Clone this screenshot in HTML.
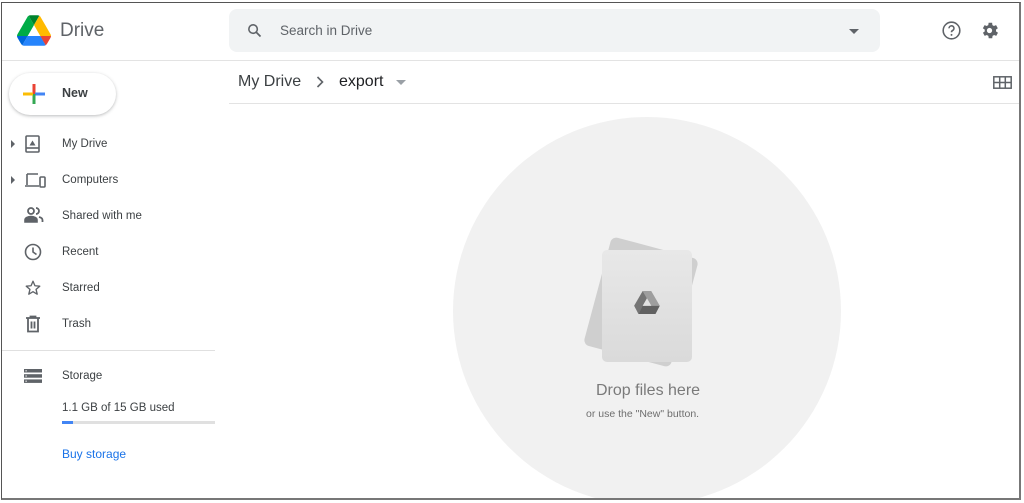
<!DOCTYPE html>
<html><head><style>
*{margin:0;padding:0;box-sizing:border-box}
body{width:1024px;height:503px;background:#fff;font-family:"Liberation Sans",Arial,sans-serif;position:relative;overflow:hidden;color:#3c4043}
.frame{position:absolute;left:1px;top:2px;width:1020px;height:498px;border:1px solid #555;border-right:2px solid #777;border-bottom:2px solid #777;z-index:5}
.a{position:absolute}
.nav{position:absolute;left:62px;font-size:11.5px;color:#3c4043}
.ic{position:absolute;left:24px}
</style></head><body>
<div class="frame"></div>
<!-- logo -->
<svg class="a" style="left:17px;top:15px" width="34" height="31" viewBox="0 0 87.3 78">
<path d="m6.6 66.85 3.85 6.65c.8 1.4 1.950 2.5 3.3 3.3l13.75-23.8h-27.5c0 1.55.4 3.1 1.2 4.5z" fill="#0066da"/>
<path d="m43.65 25-13.75-23.8c-1.35.8-2.5 1.9-3.3 3.3l-25.4 44a9.06 9.06 0 0 0 -1.2 4.5h27.5z" fill="#00ac47"/>
<path d="m73.55 76.8c1.35-.8 2.5-1.9 3.3-3.3l1.6-2.75 7.650-13.25c.8-1.4 1.2-2.95 1.2-4.5h-27.5l5.85 11.5z" fill="#ea4335"/>
<path d="m43.65 25 13.75-23.8c-1.35-.8-2.9-1.2-4.5-1.2h-18.5c-1.6 0-3.15.45-4.5 1.2z" fill="#00832d"/>
<path d="m59.8 53h-32.3l-13.75 23.8c1.35.8 2.9 1.2 4.5 1.2h50.8c1.6 0 3.15-.45 4.5-1.2z" fill="#2684fc"/>
<path d="m73.4 26.5-12.7-22c-.8-1.4-1.95-2.5-3.3-3.3l-13.75 23.8 16.15 28h27.45c0-1.55-.4-3.1-1.2-4.5z" fill="#ffba00"/>
</svg>
<div class="a" style="left:60px;top:20px;font-size:19px;color:#5f6368">Drive</div>
<!-- search -->
<div class="a" style="left:229px;top:9px;width:651px;height:43px;background:#f1f3f4;border-radius:8px"></div>
<svg class="a" style="left:246px;top:22px" width="17" height="17" viewBox="0 0 24 24"><circle cx="10" cy="10" r="6" fill="none" stroke="#5f6368" stroke-width="2.2"/><path d="M14.5 14.5l6 6" stroke="#5f6368" stroke-width="2.4"/></svg>
<div class="a" style="left:280px;top:23px;font-size:13.5px;color:#5f6368">Search in Drive</div>
<div class="a" style="left:849px;top:29px;border-left:5px solid transparent;border-right:5px solid transparent;border-top:5px solid #5f6368"></div>
<svg class="a" style="left:941px;top:20px" width="21" height="21" viewBox="0 0 24 24"><circle cx="12" cy="12" r="9.5" fill="none" stroke="#5f6368" stroke-width="1.8"/><path d="M9.2 9.5a2.8 2.8 0 1 1 4 2.5c-.9.5-1.2 1-1.2 2" fill="none" stroke="#5f6368" stroke-width="1.8"/><circle cx="12" cy="17" r="1.1" fill="#5f6368"/></svg>
<svg class="a" style="left:979px;top:20px" width="21" height="21" viewBox="0 0 24 24"><path fill="#5f6368" fill-rule="evenodd" d="M19.4 13a7.5 7.5 0 0 0 0-2l2.1-1.6-2-3.5-2.5 1a7 7 0 0 0-1.7-1L15 3.2h-4l-.4 2.7a7 7 0 0 0-1.7 1l-2.5-1-2 3.5L6.6 11a7.5 7.5 0 0 0 0 2l-2.1 1.6 2 3.5 2.5-1a7 7 0 0 0 1.7 1l.4 2.7h4l.4-2.7a7 7 0 0 0 1.7-1l2.5 1 2-3.5zM12 15a3 3 0 1 1 0-6 3 3 0 0 1 0 6z"/></svg>
<div class="a" style="left:2px;top:60px;width:1018px;height:1px;background:#e3e3e3"></div>
<!-- New -->
<div class="a" style="left:9px;top:73px;width:107px;height:42px;border-radius:21px;background:#fff;box-shadow:0 1px 3px rgba(60,64,67,.35)"></div>
<svg class="a" style="left:23px;top:83px" width="22" height="22" viewBox="0 0 22 22"><rect x="9.5" y="1" width="3" height="10" fill="#ea4335"/><rect x="12" y="9.5" width="10" height="3" fill="#4285f4"/><rect x="9.5" y="11" width="3" height="10" fill="#34a853"/><rect x="0" y="9.5" width="10" height="3" fill="#fbbc04"/></svg>
<div class="a" style="left:62px;top:86px;font-size:12.5px;font-weight:bold;color:#3c4043">New</div>
<!-- nav -->
<div class="a" style="left:11px;top:140px;border-top:4px solid transparent;border-bottom:4px solid transparent;border-left:4px solid #5f6368"></div>
<div class="a" style="left:11px;top:176px;border-top:4px solid transparent;border-bottom:4px solid transparent;border-left:4px solid #5f6368"></div>
<svg class="ic" style="top:135px" width="18" height="18" viewBox="0 0 18 18"><rect x="2" y="1" width="13" height="16" rx="1" fill="none" stroke="#5f6368" stroke-width="1.6"/><path d="M2 13h13" stroke="#5f6368" stroke-width="1.6"/><path d="M5.5 10.5l3-5 3 5z" fill="#5f6368"/></svg>
<div class="nav" style="top:138px">My Drive</div>
<svg class="ic" style="top:172px" width="22" height="16" viewBox="0 0 22 16"><path d="M3 2h11M3 2v11M1 14h14" stroke="#5f6368" stroke-width="1.6" fill="none"/><rect x="16" y="5" width="5" height="10" rx="1" fill="none" stroke="#5f6368" stroke-width="1.6"/></svg>
<div class="nav" style="top:174px">Computers</div>
<svg class="ic" style="top:207px" width="20" height="16" viewBox="0 0 20 16"><circle cx="7" cy="4" r="3" fill="none" stroke="#5f6368" stroke-width="1.8"/><path d="M1 15v-2c0-2 3-3.5 6-3.5s6 1.5 6 3.5v2z" fill="#5f6368" stroke="#5f6368" stroke-width="1.6"/><path d="M12 1a3 3 0 0 1 0 6M15 10c2 .5 3.5 1.5 3.5 3v2" fill="none" stroke="#5f6368" stroke-width="1.8"/></svg>
<div class="nav" style="top:210px">Shared with me</div>
<svg class="ic" style="top:243px" width="18" height="18" viewBox="0 0 18 18"><circle cx="9" cy="9" r="7.5" fill="none" stroke="#5f6368" stroke-width="1.6"/><path d="M9 4.5V9l3.5 2.5" fill="none" stroke="#5f6368" stroke-width="1.6"/></svg>
<div class="nav" style="top:246px">Recent</div>
<svg class="ic" style="top:279px" width="18" height="18" viewBox="0 0 24 24"><path d="M12 3l2.6 6 6.4.6-4.9 4.3 1.5 6.3L12 16.9 6.4 20.2l1.5-6.3L3 9.6 9.4 9z" fill="none" stroke="#5f6368" stroke-width="1.8" stroke-linejoin="round"/></svg>
<div class="nav" style="top:282px">Starred</div>
<svg class="ic" style="top:315px" width="18" height="18" viewBox="0 0 18 18"><path d="M2 3h14M6.5 3V1.5h5V3M4 3v13.5h10V3M7.5 6.5v7M10.5 6.5v7" fill="none" stroke="#5f6368" stroke-width="1.8"/></svg>
<div class="nav" style="top:318px">Trash</div>
<div class="a" style="left:2px;top:350px;width:213px;height:1px;background:#e0e0e0"></div>
<svg class="ic" style="top:368px" width="18" height="16" viewBox="0 0 18 16"><rect x="0" y="1" width="18" height="3.5" fill="#5f6368"/><rect x="0" y="6.2" width="18" height="3.5" fill="#5f6368"/><rect x="0" y="11.4" width="18" height="3.5" fill="#5f6368"/><rect x="1.5" y="2.2" width="1.2" height="1.2" fill="#fff"/><rect x="1.5" y="7.4" width="1.2" height="1.2" fill="#fff"/><rect x="1.5" y="12.6" width="1.2" height="1.2" fill="#fff"/></svg>
<div class="nav" style="top:370px">Storage</div>
<div class="nav" style="top:402px">1.1 GB of 15 GB used</div>
<div class="a" style="left:62px;top:421px;width:153px;height:3px;background:#e0e0e0"></div>
<div class="a" style="left:62px;top:421px;width:11px;height:3px;background:#4285f4"></div>
<div class="nav" style="top:447px;color:#1a73e8;font-size:12px">Buy storage</div>
<!-- breadcrumb -->
<div class="a" style="left:238px;top:73px;font-size:16px;color:#3c4043">My Drive</div>
<svg class="a" style="left:315px;top:75px" width="10" height="14" viewBox="0 0 10 14"><path d="M2.5 2l5 5-5 5" fill="none" stroke="#5f6368" stroke-width="1.6"/></svg>
<div class="a" style="left:339px;top:73px;font-size:16px;color:#202124">export</div>
<div class="a" style="left:396px;top:80px;border-left:5px solid transparent;border-right:5px solid transparent;border-top:5px solid #9aa0a6"></div>
<svg class="a" style="left:993px;top:76px" width="19" height="13" viewBox="0 0 19 13"><rect x=".8" y=".8" width="17.4" height="11.4" fill="none" stroke="#5f6368" stroke-width="1.5"/><path d="M.8 6.5h17.4M6.7.8v11.4M12.3.8v11.4" stroke="#5f6368" stroke-width="1.5"/></svg>
<div class="a" style="left:229px;top:103px;width:791px;height:1px;background:#e3e3e3"></div>
<!-- empty state -->
<div class="a" style="left:440px;top:110px;width:420px;height:388px;overflow:hidden">
<div class="a" style="left:13px;top:7px;width:388px;height:388px;border-radius:50%;background:#f1f1f1"></div>
</div>
<div class="a" style="left:596px;top:246px;width:90px;height:112px;border-radius:6px;background:#cfcfcf;transform:rotate(15deg)"></div>
<div class="a" style="left:602px;top:250px;width:90px;height:112px;border-radius:5px;background:linear-gradient(#e8e8e8,#dadada)"></div>
<svg class="a" style="left:634px;top:291px" width="26" height="23" viewBox="0 0 87.3 78"><path d="M29 0h29l29 50H58z" fill="#9e9e9e"/><path d="M29 0L0 50l14.5 28L43.6 25z" fill="#757575"/><path d="M14.5 78h58L87 50H29z" fill="#616161"/><path d="M43.6 25L58 50H29z" fill="#e2e2e2"/></svg>
<div class="a" style="left:596px;top:382px;font-size:16px;color:#7a7a7a">Drop files here</div>
<div class="a" style="left:586px;top:408px;font-size:10.5px;color:#6e6e6e">or use the "New" button.</div>
</body></html>
